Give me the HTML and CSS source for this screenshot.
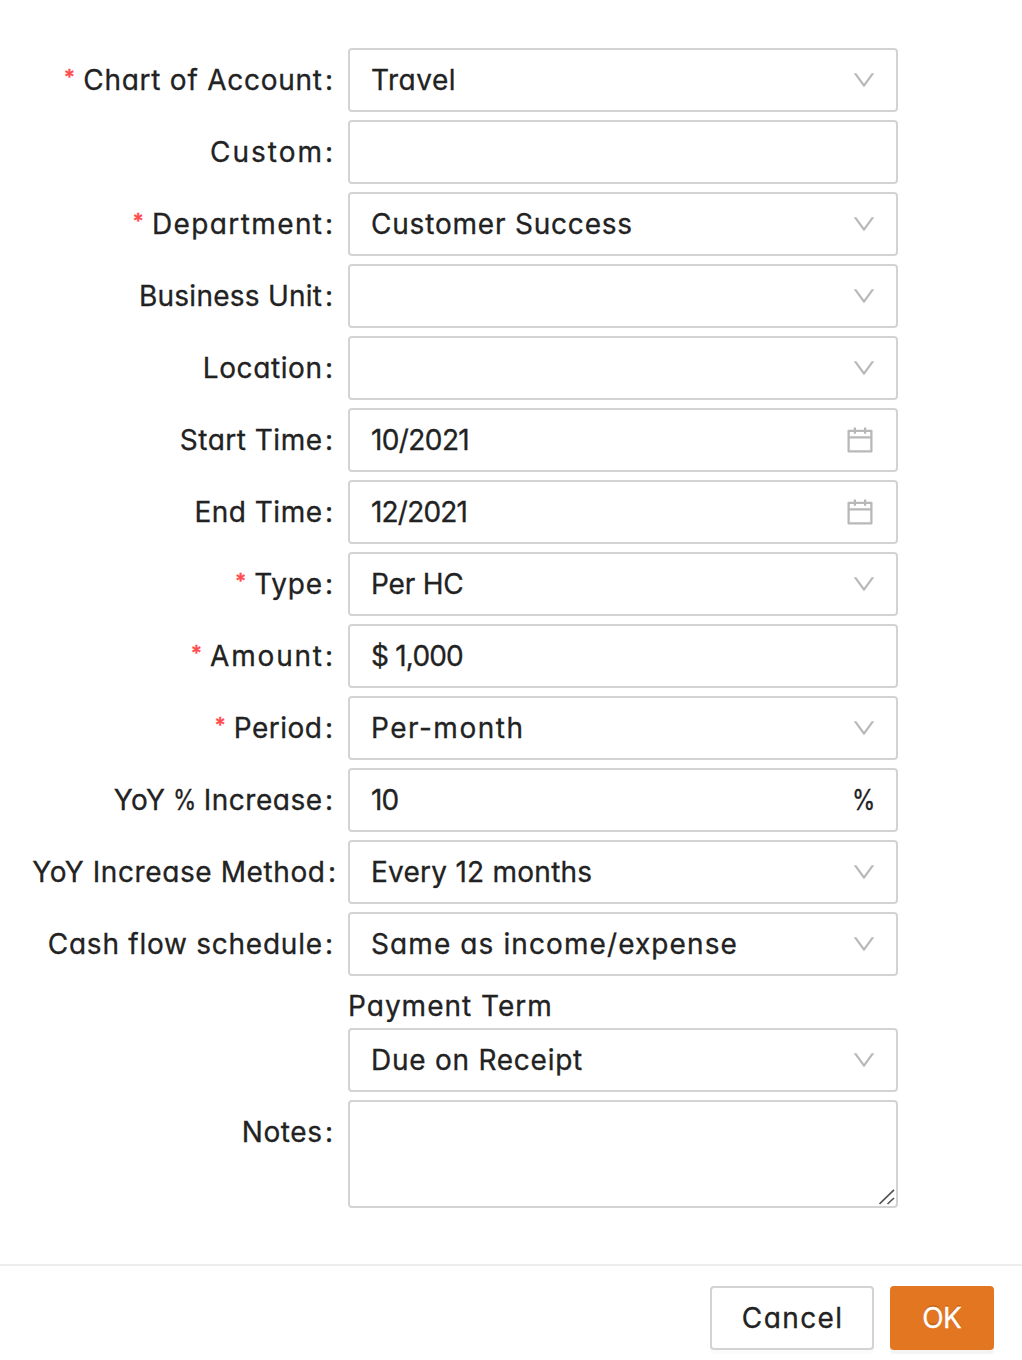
FILE: index.html
```html
<!DOCTYPE html>
<html lang="en">

<head>
  <meta charset="UTF-8" />
  <meta name="viewport" content="width=device-width, initial-scale=1.0" />
  <title>Expense Plan</title>
  <link rel="stylesheet" href="styles.css">
</head>

<body>
  <!-- shared icons -->
  <svg class="sprite" aria-hidden="true">
    <symbol id="down" viewBox="64 64 896 896">
      <path d="M884 256h-75c-5.1 0-9.9 2.5-12.9 6.6L512 654.2 227.9 262.6c-3-4.1-7.8-6.6-12.9-6.6h-75c-6.5 0-10.3 7.4-6.5 12.7l352.6 486.1c12.8 17.6 39 17.6 51.7 0l352.6-486.1c3.9-5.3.1-12.7-6.4-12.7z" />
    </symbol>
    <symbol id="calendar" viewBox="64 64 896 896">
      <path d="M880 184H712v-64c0-4.4-3.6-8-8-8h-56c-4.4 0-8 3.6-8 8v64H384v-64c0-4.4-3.6-8-8-8h-56c-4.4 0-8 3.6-8 8v64H144c-17.7 0-32 14.3-32 32v664c0 17.7 14.3 32 32 32h736c17.7 0 32-14.3 32-32V216c0-17.7-14.3-32-32-32zm-40 656H184V460h656v380zM184 392V256h128v48c0 4.4 3.6 8 8 8h56c4.4 0 8-3.6 8-8v-48h256v48c0 4.4 3.6 8 8 8h56c4.4 0 8-3.6 8-8v-48h128v136H184z" />
    </symbol>
  </svg>

  <form class="form" id="expenseForm">
    <div class="row">
      <label class="label required"><span class="text ls-7">Chart of Account</span></label>
      <div class="field"><span class="text ls-5">Travel</span><svg class="down"><use href="#down" /></svg></div>
    </div>
    <div class="row">
      <label class="label"><span class="text ls-20">Custom</span></label>
      <div class="field"></div>
    </div>
    <div class="row">
      <label class="label required"><span class="text ls-14">Department</span></label>
      <div class="field"><span class="text ls-8">Customer Success</span><svg class="down"><use href="#down" /></svg></div>
    </div>
    <div class="row">
      <label class="label"><span class="text ls-2">Business Unit</span></label>
      <div class="field"><svg class="down"><use href="#down" /></svg></div>
    </div>
    <div class="row">
      <label class="label"><span class="text ls-6">Location</span></label>
      <div class="field"><svg class="down"><use href="#down" /></svg></div>
    </div>
    <div class="row">
      <label class="label"><span class="text ls-5">Start Time</span></label>
      <div class="field"><span class="text ls-minus-6">10/2021</span><svg class="calendar"><use href="#calendar" /></svg></div>
    </div>
    <div class="row">
      <label class="label"><span class="text ls-5">End Time</span></label>
      <div class="field"><span class="text ls-minus-8">12/2021</span><svg class="calendar"><use href="#calendar" /></svg></div>
    </div>
    <div class="row">
      <label class="label required"><span class="text ls-7">Type</span></label>
      <div class="field"><span class="text ls-minus-2">Per HC</span><svg class="down"><use href="#down" /></svg></div>
    </div>
    <div class="row">
      <label class="label required"><span class="text ls-18">Amount</span></label>
      <div class="field"><span class="text ls-minus-8">$ 1,000</span></div>
    </div>
    <div class="row">
      <label class="label required"><span class="text ls-5">Period</span></label>
      <div class="field"><span class="text ls-15">Per-month</span><svg class="down"><use href="#down" /></svg></div>
    </div>
    <div class="row">
      <label class="label"><span class="text ls-5">YoY <span class="percent">%</span> Increase</span></label>
      <div class="field"><span class="text ls-minus-8">10</span><span class="suffix percent">%</span></div>
    </div>
    <div class="row">
      <label class="label wide"><span class="text ls-6">YoY Increase Method</span></label>
      <div class="field"><span class="text ls-2">Every 12 months</span><svg class="down"><use href="#down" /></svg></div>
    </div>
    <div class="row">
      <label class="label"><span class="text ls-7">Cash flow schedule</span></label>
      <div class="field"><span class="text ls-11">Same as income/expense</span><svg class="down"><use href="#down" /></svg></div>
    </div>
    <div class="row">
      <div class="term">
        <div class="term-title"><span class="text ls-10">Payment Term</span></div>
        <div class="field"><span class="text ls-7">Due on Receipt</span><svg class="down"><use href="#down" /></svg></div>
      </div>
    </div>
    <div class="row">
      <label class="label" for="notes"><span class="text ls-6">Notes</span></label>
      <div class="notes-wrap">
        <textarea class="notes" id="notes" name="notes"></textarea>
        <svg class="grip" viewBox="0 0 16 16"><path d="M.5 15L15 .8M8.5 15L15 9" /></svg>
      </div>
    </div>
  </form>

  <div class="footer">
    <button class="btn" type="button"><span class="text ls-14">Cancel</span></button>
    <button class="btn primary" type="submit" form="expenseForm"><span class="text ls-minus-8">OK</span></button>
  </div>
</body>

</html>
```

FILE: styles.css
```css
* {
  box-sizing: border-box;
  margin: 0;
  padding: 0;
}

body {
  background: #fff;
  color: #222;
  font-family: 'Inter', sans-serif;
  font-feature-settings: "cv11";
  font-size: 28px;
  line-height: 44px;
  -webkit-text-stroke: 0.3px currentColor;
}

.sprite {
  display: none;
}

.form {
  display: flex;
  flex-direction: column;
  gap: 8px;
  height: 1264px;
  padding-top: 48px;
}

.row {
  display: grid;
  grid-template-columns: 348px 550px;
}

.label {
  display: flex;
  align-items: center;
  justify-content: flex-end;
  height: 64px;
  padding-right: 15px;
  white-space: nowrap;
}

.label.wide {
  padding-right: 12px;
}

.label::after {
  content: ":";
  width: 8px;
  margin-left: 3px;
}

.label.required::before {
  content: "*";
  color: #ff4d4f;
  font-size: 21px;
  font-weight: 600;
  margin-right: 8px;
  padding-bottom: 4px;
  -webkit-text-stroke: 0.3px #ff4d4f;
}

/* letter spacing, the last letter keeps no trailing gap */
.text {
  --ls: 0px;
  letter-spacing: var(--ls);
  margin-right: calc(var(--ls) * -1);
  white-space: nowrap;
}

.ls-minus-8 { --ls: -0.8px; }
.ls-minus-6 { --ls: -0.6px; }
.ls-minus-2 { --ls: -0.2px; }
.ls-2 { --ls: 0.25px; }
.ls-5 { --ls: 0.5px; }
.ls-6 { --ls: 0.6px; }
.ls-7 { --ls: 0.75px; }
.ls-8 { --ls: 0.8px; }
.ls-10 { --ls: 1px; }
.ls-11 { --ls: 1.1px; }
.ls-14 { --ls: 1.4px; }
.ls-15 { --ls: 1.5px; }
.ls-18 { --ls: 1.8px; }
.ls-20 { --ls: 2px; }

.percent {
  display: inline-block;
  letter-spacing: 0;
  margin: 0 -3px;
  transform: scaleX(0.85);
}

.field {
  display: flex;
  align-items: center;
  height: 64px;
  padding: 0 20px 0 21px;
  border: 2px solid #d3d3d3;
  border-radius: 4px;
  background: #fff;
}

.down,
.calendar {
  flex: none;
  margin-left: auto;
  fill: #b8b8b8;
}

.down {
  width: 24px;
  height: 24px;
}

.calendar {
  width: 28px;
  height: 28px;
  margin-right: 2px;
}

.suffix {
  margin-left: auto;
  margin-right: -1px;
}

.term {
  grid-column: 2;
}

.term-title {
  height: 44px;
}

.notes-wrap {
  position: relative;
  height: 108px;
}

.notes {
  display: block;
  width: 100%;
  height: 108px;
  padding: 8px 22px;
  border: 2px solid #d3d3d3;
  border-radius: 4px;
  color: inherit;
  font: inherit;
  outline: none;
  resize: none;
}

.grip {
  position: absolute;
  right: 3px;
  bottom: 3px;
  width: 16px;
  height: 16px;
  fill: none;
  stroke: #555;
  stroke-width: 1.7;
}

.footer {
  display: flex;
  justify-content: flex-end;
  gap: 16px;
  height: 96px;
  padding: 20px 28px 0 0;
  border-top: 2px solid #ededed;
}

.btn {
  width: 164px;
  height: 64px;
  border: 2px solid #d3d3d3;
  border-radius: 4px;
  background: #fff;
  box-shadow: 0 4px 0 rgba(0, 0, 0, 0.016);
  color: #222;
  cursor: pointer;
  font: inherit;
  font-feature-settings: inherit;
}

.btn.primary {
  width: 104px;
  border-color: #e37620;
  background: #e37620;
  box-shadow: 0 4px 0 rgba(0, 0, 0, 0.045);
  color: #fff;
  text-shadow: 0 -2px 0 rgba(0, 0, 0, 0.12);
  -webkit-text-stroke: 0.3px #fff;
}
```
